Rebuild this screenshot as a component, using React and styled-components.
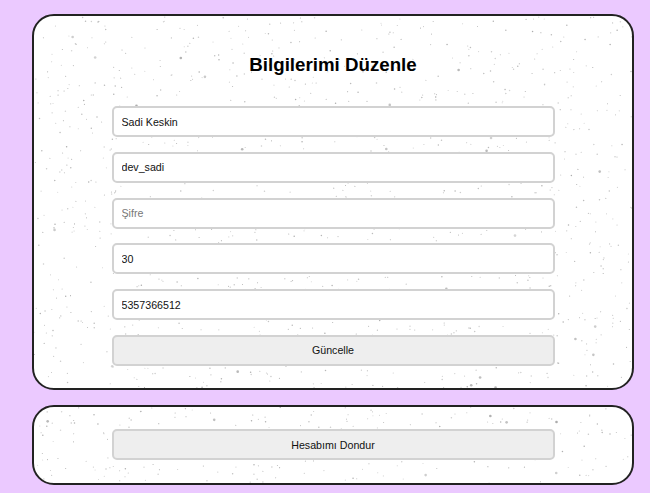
import { useMemo } from "react"
import styled, { createGlobalStyle } from "styled-components"

const GlobalStyle = createGlobalStyle`
  html, body {
    margin: 0;
    background: #ebc9ff;
    font-family: "Liberation Sans", Arial, sans-serif;
    overflow: hidden;
  }
`

const Page = styled.div`
  display: flex;
  flex-direction: column;
  gap: 15px;
  padding: 14px 16px 8px 32px;
`

const Card = styled.section`
  position: relative;
  overflow: hidden;
  box-sizing: border-box;
  width: 602px;
  height: ${(p) => p.$height}px;
  padding: ${(p) => p.$pad};
  background: #fff;
  border: 2px solid #222;
  border-radius: 22px;
`

const Speckles = styled.svg`
  position: absolute;
  inset: 0;
  width: 100%;
  height: 100%;
`

const Form = styled.div`
  position: relative;
  display: flex;
  flex-direction: column;
  gap: 14.8px;
  width: 443px;
  margin: 0 auto;
`

const Title = styled.h2`
  position: relative;
  margin: 0 0 30px;
  font-size: 18.72px;
  line-height: 23px;
  font-weight: 700;
  text-align: center;
  color: #000;
`

const Input = styled.input`
  box-sizing: border-box;
  width: 100%;
  height: 31px;
  padding: 0 8px;
  font-family: inherit;
  font-size: 10.67px;
  color: #111;
  background: #fff;
  border: 2px solid #d2d2d2;
  border-radius: 5px;
  outline: 0;
  &::placeholder {
    color: #777;
  }
`

const Button = styled.button`
  box-sizing: border-box;
  width: 100%;
  height: 31px;
  font-family: inherit;
  font-size: 10.67px;
  color: #111;
  background: #eee;
  border: 2px solid #d2d2d2;
  border-radius: 5px;
`

function makeSpeckles(count, w, h, seed) {
  let s = seed
  const rnd = () => {
    s = (s * 16807) % 2147483647
    return s / 2147483647
  }
  const dots = []
  for (let i = 0; i < count; i++) {
    const big = rnd()
    dots.push({
      x: rnd() * w,
      y: rnd() * h,
      r: big > 0.97 ? 1.3 : big > 0.7 ? 0.75 : 0.55,
      o: 0.35 + rnd() * 0.35,
    })
  }
  return dots
}

function Texture({ w, h, count, seed }) {
  const dots = useMemo(() => makeSpeckles(count, w, h, seed), [w, h, count, seed])
  return (
    <Speckles viewBox={`0 0 ${w} ${h}`} aria-hidden="true">
      {dots.map((d, i) => (
        <circle key={i} cx={d.x} cy={d.y} r={d.r} fill="#888" opacity={d.o} />
      ))}
    </Speckles>
  )
}

export default function App() {
  return (
    <>
      <GlobalStyle />
      <Page>
        <Card $height={376} $pad="37px 0 0">
          <Texture w={598} h={372} count={1300} seed={4711} />
          <Title>Bilgilerimi Düzenle</Title>
          <Form>
            <Input defaultValue="Sadi Keskin" />
            <Input defaultValue="dev_sadi" />
            <Input placeholder="Şifre" />
            <Input defaultValue="30" />
            <Input defaultValue="5357366512" />
            <Button>Güncelle</Button>
          </Form>
        </Card>
        <Card $height={80} $pad="22px 0 0">
          <Texture w={598} h={76} count={260} seed={9127} />
          <Form>
            <Button>Hesabımı Dondur</Button>
          </Form>
        </Card>
      </Page>
    </>
  )
}
